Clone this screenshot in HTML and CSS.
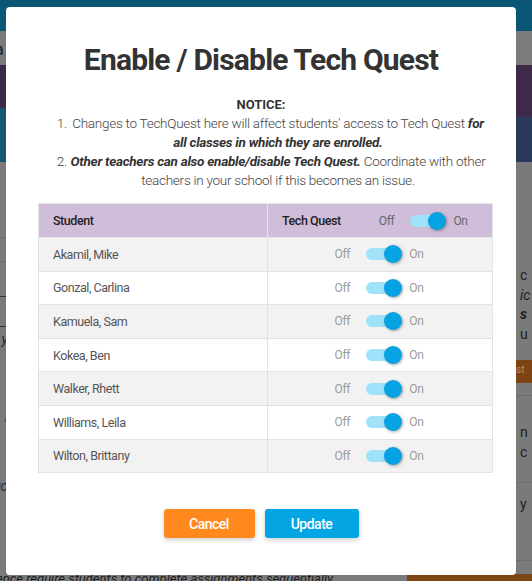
FILE: index.html
```html
<html lang="en">
<head>
    <meta charset="UTF-8">
    <meta name="viewport" content="width=device-width, initial-scale=1.0">
    <title>Enable / Disable Tech Quest</title>
    <link rel="stylesheet" href="styles.css">
</head>
<body>

    <div class="pagina">
        <div class="faixa topo"></div>
        <div class="faixa cinza"><span class="frag">a</span></div>
        <div class="faixa roxa"></div>
        <div class="faixa azul">
            <div class="azul-esq"></div>
            <div class="azul-dir"></div>
        </div>
        <div class="resto">
            <div class="col-esq">
                <div class="linha clara" style="height: 75px"></div>
                <div class="linha clara" style="height: 23px"></div>
                <div class="linha escura" style="height: 34px"></div>
                <div class="linha escura" style="height: 29px"></div>
                <div class="txt-esq" style="height: 20px"><i>y</i></div>
                <div class="txt-esq" style="height: 78px"><i>i</i></div>
                <div class="txt-esq" style="height: 69px"><i>yo</i></div>
            </div>
            <div class="col-dir">
                <div class="txt-dir">
                    <span>c</span>
                    <i>ic</i>
                    <b><i>s</i></b>
                    <span>u</span>
                </div>
                <div class="frag-botao">st</div>
                <div class="linha clara" style="height: 12px"></div>
                <div class="txt-dir curto">
                    <span>n</span>
                    <span>c</span>
                </div>
                <div class="linha clara" style="height: 20px"></div>
                <div class="txt-dir mini"><span>y</span></div>
                <div class="linha clara" style="height: 45px"></div>
            </div>
        </div>
        <div class="rodape">
            <p class="frag-base">ence require students to complete assignments sequentially.</p>
            <div class="frag-laranja"></div>
        </div>
    </div>

    <div class="modal">
        <h1>Enable / Disable Tech Quest</h1>

        <div class="aviso">
            <strong>NOTICE:</strong>
            <ol>
                <li>Changes to TechQuest here will affect students' access to Tech Quest <b><i>for all classes in which they are enrolled.</i></b></li>
                <li><b><i>Other teachers can also enable/disable Tech Quest.</i></b> Coordinate with other teachers in your school if this becomes an issue.</li>
            </ol>
        </div>

        <table class="tabela">
            <thead>
                <tr>
                    <th class="col-aluno">Student</th>
                    <th class="col-tq">
                        <div class="cab-tq">
                            <span>Tech Quest</span>
                            <div class="chave-grupo">
                                <span class="off">Off</span>
                                <span class="chave"><span class="bola"></span></span>
                                <span class="on">On</span>
                            </div>
                        </div>
                    </th>
                </tr>
            </thead>
            <tbody id="alunos"></tbody>
        </table>

        <div class="botoes">
            <button class="btn cancelar">Cancel</button>
            <button class="btn atualizar">Update</button>
        </div>
    </div>

    <script>
        const alunos = ['Akamil, Mike', 'Gonzal, Carlina', 'Kamuela, Sam', 'Kokea, Ben', 'Walker, Rhett', 'Williams, Leila', 'Wilton, Brittany'];
        const corpo = document.getElementById('alunos');

        alunos.forEach(nome => {
            const tr = document.createElement('tr');
            tr.innerHTML =
                '<td>' + nome + '</td>' +
                '<td><div class="chave-grupo centro">' +
                '<span class="off">Off</span>' +
                '<span class="chave"><span class="bola"></span></span>' +
                '<span class="on">On</span>' +
                '</div></td>';
            corpo.appendChild(tr);
        });
    </script>
</body>
</html>
```

FILE: styles.css
```css
body {
    margin: 0;
    font-family: Roboto, "Liberation Sans", sans-serif;
    background-color: #7b7b7b;
    width: 532px;
    height: 581px;
    overflow: hidden;
    position: relative;
}

/* fundo escurecido atras do modal */
.pagina {
    display: flex;
    flex-direction: column;
    height: 581px;
}
.faixa.topo {
    height: 31px;
    background-color: #0a5675;
}
.faixa.cinza {
    height: 34px;
    background-color: #7b7b7b;
    color: #1c1c1c;
    font-size: 16px;
}
.frag {
    display: block;
    margin: 9px 0 0 -5px;
}
.faixa.roxa {
    height: 43px;
    background-color: #3e2a48;
}
.faixa.azul {
    height: 54px;
    display: flex;
}
.azul-esq {
    flex: 1;
    background-color: #175570;
}
.azul-dir {
    width: 16px;
    background-color: #2a3a5c;
    border-top: 9px solid #3e2a48;
}
.resto {
    flex: 1;
    display: flex;
    justify-content: space-between;
    background-color: #7a7a7a;
}
.col-esq {
    width: 14px;
    margin-left: -6px;
    display: flex;
    flex-direction: column;
}
.col-dir {
    width: 20px;
    display: flex;
    flex-direction: column;
}
.linha {
    flex-shrink: 0;
}
.linha.clara {
    border-bottom: 1px solid #6c6c6c;
}
.linha.escura {
    border-bottom: 1px solid #333;
}
.txt-esq {
    display: flex;
    align-items: flex-end;
    justify-content: flex-end;
    font-size: 14px;
    color: #1e2a44;
    flex-shrink: 0;
}
.txt-dir {
    display: flex;
    flex-direction: column;
    padding: 104px 0 0 8px;
    font-size: 14px;
    line-height: 19.5px;
    color: #1e1e1e;
}
.txt-dir.curto {
    padding-top: 27px;
}
.txt-dir.mini {
    padding-top: 12px;
}
.frag-botao {
    margin: 16px 0 0 4px;
    height: 23px;
    background-color: #7c4412;
    color: #b98a5f;
    font-size: 10px;
    line-height: 20px;
    overflow: hidden;
}
.rodape {
    height: 7px;
    display: flex;
    align-items: flex-start;
}
.frag-base {
    margin: -3px 0 0 -4px;
    width: 411px;
    font-size: 13px;
    font-style: italic;
    white-space: nowrap;
    overflow: hidden;
    color: #1c1c1c;
}
.frag-laranja {
    flex: 1;
    height: 7px;
    background-color: #7c4412;
}

/* modal */
.modal {
    position: absolute;
    top: 7px;
    left: 6px;
    width: 510px;
    height: 568px;
    background-color: #fff;
    border-radius: 4px;
    box-sizing: border-box;
}
h1 {
    margin: 35px 0 0;
    text-align: center;
    font-size: 30px;
    font-weight: 700;
    letter-spacing: -0.8px;
    color: #333;
    line-height: 36px;
}
.aviso {
    margin-top: 17px;
    text-align: center;
    font-size: 13.5px;
    font-weight: 300;
    letter-spacing: -0.26px;
    line-height: 19px;
    color: #444;
}
.aviso strong {
    display: block;
    font-size: 13px;
    font-weight: 700;
    letter-spacing: 0;
    color: #333;
}
.aviso ol {
    margin: 0 0 0 64px;
    padding: 0;
    width: 416px;
}
.aviso li::marker {
    color: #444;
}
.aviso b {
    font-weight: 700;
    color: #333;
}

/* tabela */
.tabela {
    margin: 13px 23px 0 32px;
    width: 455px;
    border-collapse: collapse;
    font-size: 12.5px;
    letter-spacing: -0.45px;
}
.tabela th, .tabela td {
    border: 1px solid #dfe2e8;
    padding: 0 14px;
    height: 33.6px;
    text-align: left;
}
.tabela th {
    background-color: #cfbdda;
    color: #222;
    font-weight: 500;
    font-size: 12.5px;
    height: 34px;
    border-color: #e4e4ea;
}
.col-aluno {
    width: 200px;
}
.tabela td {
    color: #555;
}
.tabela tbody tr:nth-child(odd) {
    background-color: #f2f2f2;
}
.cab-tq {
    display: flex;
    align-items: center;
    gap: 38px;
}
.chave-grupo {
    display: flex;
    align-items: center;
    font-size: 12px;
    font-weight: 400;
    letter-spacing: -0.3px;
}
.chave-grupo.centro {
    justify-content: center;
    margin-left: -2px;
}
.off {
    color: #9a9a9a;
    margin-right: 16px;
}
.on {
    color: #9a9a9a;
    margin-left: 9px;
}
.cab-tq .off, .cab-tq .on {
    color: #666;
}
.chave {
    position: relative;
    width: 34px;
    height: 12px;
    border-radius: 6px;
    background-color: #a0e2fa;
}
.bola {
    position: absolute;
    right: -2px;
    top: -3px;
    width: 18px;
    height: 18px;
    border-radius: 50%;
    background-color: #05a3e1;
    box-shadow: 1px 1px 3px rgba(0, 0, 0, 0.35);
}

/* botoes */
.botoes {
    display: flex;
    justify-content: center;
    gap: 10px;
    margin-top: 36px;
}
.btn {
    height: 29px;
    border: none;
    border-radius: 3px;
    color: #fff;
    font-family: Roboto, "Liberation Sans", sans-serif;
    font-size: 14px;
    font-weight: 500;
    letter-spacing: -0.5px;
    box-shadow: 0 2px 5px rgba(0, 0, 0, 0.2);
    cursor: pointer;
}
.cancelar {
    width: 91px;
    background-color: #ff891c;
}
.atualizar {
    width: 94px;
    background-color: #03a6e3;
}
```
